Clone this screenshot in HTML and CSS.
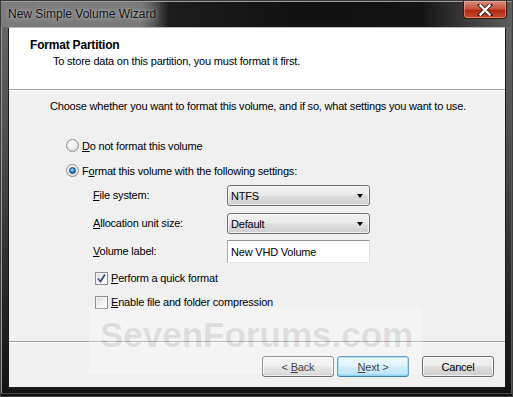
FILE: index.html
```html
<!DOCTYPE html>
<html>
<head>
<meta charset="utf-8">
<link rel="stylesheet" href="styles.css">
</head>
<body>
<div class="window">
  <div class="titlebar">
    <span class="title">New Simple Volume Wizard</span>
    <div class="close">
      <svg width="16" height="12" viewBox="0 0 16 12">
        <path d="M3 1 L13 11 M13 1 L3 11" stroke="#3a1a14" stroke-width="4.2" stroke-linecap="square"/>
        <path d="M3.5 1.5 L12.5 10.5 M12.5 1.5 L3.5 10.5" stroke="#ffffff" stroke-width="2.4" stroke-linecap="square"/>
      </svg>
    </div>
  </div>
  <div class="client">
    <div class="header">
      <div class="h-title">Format Partition</div>
      <div class="h-sub">To store data on this partition, you must format it first.</div>
    </div>
    <div class="content">
      <p class="intro">Choose whether you want to format this volume, and if so, what settings you want to use.</p>
      <div class="opt-row">
        <span class="radio"></span>
        <span><u>D</u>o not format this volume</span>
      </div>
      <div class="opt-row">
        <span class="radio checked"><span class="dot"></span></span>
        <span>F<u>o</u>rmat this volume with the following settings:</span>
      </div>
      <div class="settings">
        <span class="lbl"><u>F</u>ile system:</span>
        <div class="combo"><span>NTFS</span><span class="arrow"></span></div>
        <span class="lbl"><u>A</u>llocation unit size:</span>
        <div class="combo"><span>Default</span><span class="arrow"></span></div>
        <span class="lbl"><u>V</u>olume label:</span>
        <div class="textbox">New VHD Volume</div>
      </div>
      <div class="checks">
        <div class="chk-row">
          <span class="checkbox">
            <svg width="11" height="11" viewBox="0 0 11 11"><path d="M2 5.5 L4.5 8.5 L9 1.5" fill="none" stroke="#3b4f86" stroke-width="1.8"/></svg>
          </span>
          <span><u>P</u>erform a quick format</span>
        </div>
        <div class="chk-row">
          <span class="checkbox"></span>
          <span><u>E</u>nable file and folder compression</span>
        </div>
      </div>
    </div>
    <div class="footer">
      <button class="btn">&lt; <u>B</u>ack</button>
      <button class="btn default"><u>N</u>ext &gt;</button>
      <button class="btn cancel">Cancel</button>
    </div>
    <div class="wm-box"></div>
    <div class="watermark">SevenForums.com</div>
  </div>
  <div class="bottomframe"></div>
</div>
</body>
</html>
```
FILE: styles.css
```css
* { box-sizing: border-box; }
html, body { margin: 0; padding: 0; }
body {
  width: 513px;
  height: 397px;
  overflow: hidden;
  font-family: "Liberation Sans", Arial, sans-serif;
  font-size: 11px;
  letter-spacing: -0.2px;
  color: #000;
  background: #222;
}
.window {
  width: 513px;
  height: 397px;
  display: flex;
  flex-direction: column;
  background: linear-gradient(180deg, #6a6a6a 0%, #4a4a4a 40%, #262626 75%, #121212 100%);
  border: 1px solid #3c3c3c;
  box-shadow: inset 1px 1px 0 #9a9a9a, inset -1px -1px 0 #5a5a5a;
}
.titlebar {
  height: 26px;
  flex: none;
  display: flex;
  justify-content: space-between;
  align-items: flex-start;
  padding-left: 7px;
  padding-right: 5px;
  background: linear-gradient(90deg, #7c7c7c 0px, #7a7a7a 140px, #5a5a5a 152px, #1c1c1c 168px, #121212 300px, #141414 420px, #3e3e3e 470px, #5e5e5e 512px);
  box-shadow: inset 0 1px 0 #9a9a9a;
}
.title {
  margin-top: 6px;
  font-size: 12px;
  letter-spacing: 0;
  line-height: 15px;
  color: #111;
  text-shadow: 0 0 6px rgba(255,255,255,0.55), 0 0 2px rgba(255,255,255,0.4);
}
.close {
  width: 44px;
  height: 18px;
  display: flex;
  align-items: center;
  justify-content: center;
  border: 1px solid #3c1810;
  border-top: none;
  border-radius: 0 0 4px 4px;
  background: linear-gradient(180deg, #d88a7c 0%, #c9553f 45%, #b22b13 55%, #c44a30 100%);
  box-shadow: inset 0 0 0 1px rgba(255,200,190,0.45);
}
.close svg { display: block; }
.client {
  position: relative;
  flex: 1;
  display: flex;
  flex-direction: column;
  margin: 0 6px 0 7px;
  background: #f0f0f0;
  border: 1px solid #1a1a1a;
  border-top-color: #b8b8b8;
  overflow: hidden;
}
.header {
  height: 62px;
  flex: none;
  background: #fff;
  border-bottom: 1px solid #a0a0a0;
  box-shadow: 0 1px 0 #fff;
  padding-top: 10px;
}
.h-title {
  padding-left: 21px;
  font-weight: bold;
  font-size: 12px;
  line-height: 15px;
}
.h-sub {
  padding-left: 44px;
  margin-top: 1px;
  line-height: 15px;
}
.content {
  flex: 1;
  padding: 9px 0 0 41px;
}
.intro {
  margin: 0;
  line-height: 15px;
}
.opt-row {
  height: 25px;
  display: flex;
  align-items: center;
  gap: 3px;
  padding-left: 16px;
}
.intro + .opt-row { margin-top: 19px; }
.radio {
  width: 13px;
  height: 13px;
  border-radius: 50%;
  border: 1px solid #8e8f8f;
  background: radial-gradient(circle at 40% 35%, #ffffff 0%, #f0f0f0 40%, #cfcfcf 100%);
  display: flex;
  align-items: center;
  justify-content: center;
  flex: none;
}
.radio .dot {
  width: 7px;
  height: 7px;
  border-radius: 50%;
  background: radial-gradient(circle at 40% 35%, #9fe0ff 0%, #2f8fd8 45%, #0d3f78 100%);
  border: 1px solid #1b3d66;
}
.settings {
  margin-top: 2px;
  display: grid;
  grid-template-columns: 134px 143px;
  grid-template-rows: 21px 21px 23px;
  row-gap: 7px;
  padding-left: 43px;
  align-items: center;
}
.settings > :nth-child(5), .settings > :nth-child(6) { margin-top: -2px; }
.lbl { line-height: 15px; }
.combo {
  height: 21px;
  display: flex;
  align-items: center;
  justify-content: space-between;
  padding: 0 5px 0 3px;
  border: 1px solid #707070;
  border-radius: 3px;
  background: linear-gradient(180deg, #f2f2f2 0%, #ebebeb 48%, #dddddd 52%, #cfcfcf 100%);
  box-shadow: inset 0 0 0 1px rgba(255,255,255,0.6);
}
.arrow {
  width: 0;
  height: 0;
  border-left: 3.5px solid transparent;
  border-right: 3.5px solid transparent;
  border-top: 4px solid #000;
  margin-right: 1px;
}
.textbox {
  height: 23px;
  display: flex;
  align-items: center;
  padding-left: 3px;
  background: #fff;
  border: 1px solid #abadb3;
  border-top-color: #8e9199;
  border-bottom-color: #e3e9ef;
  border-right-color: #dbdfe6;
}
.checks {
  margin-top: 2px;
  padding-left: 45px;
}
.chk-row {
  height: 24px;
  display: flex;
  align-items: center;
  gap: 3px;
}
.checkbox {
  width: 13px;
  height: 13px;
  flex: none;
  display: flex;
  align-items: center;
  justify-content: center;
  border: 1px solid #8e8f8f;
  background: linear-gradient(135deg, #dcdcdc 0%, #f2f2f2 50%, #ffffff 100%);
  box-shadow: inset 0 0 0 1px #f4f4f4;
}
.checkbox svg { display: block; }
.footer {
  height: 46px;
  flex: none;
  border-top: 1px solid #a0a0a0;
  box-shadow: inset 0 1px 0 #fff;
  display: flex;
  align-items: flex-start;
  justify-content: flex-end;
  padding: 14px 11px 0 0;
}
.btn {
  width: 72px;
  height: 21px;
  padding: 0;
  font-family: "Liberation Sans", Arial, sans-serif;
  font-size: 11px;
  letter-spacing: -0.2px;
  color: #000;
  border: 1px solid #707070;
  border-radius: 3px;
  background: linear-gradient(180deg, #f2f2f2 0%, #ebebeb 48%, #dddddd 52%, #cfcfcf 100%);
  box-shadow: inset 0 0 0 1px rgba(255,255,255,0.7);
}
.btn + .btn { margin-left: 3px; }
.btn.cancel { margin-left: 13px; }
.btn.default {
  border-color: #3c7fb1;
  background: linear-gradient(180deg, #eaf6fd 0%, #d9f0fc 48%, #bee6fd 52%, #a7d9f5 100%);
  box-shadow: inset 0 0 0 1px #8ad4f6;
}
.wm-box {
  position: absolute;
  left: 80px;
  top: 280px;
  width: 333px;
  height: 66px;
  background: rgba(255,255,255,0.25);
  pointer-events: none;
}
.watermark {
  position: absolute;
  left: 91px;
  top: 287px;
  font-family: "Liberation Sans", Arial, sans-serif;
  font-weight: bold;
  font-size: 35px;
  letter-spacing: 0;
  line-height: 40px;
  color: rgba(0,0,0,0.1);
  pointer-events: none;
}
.bottomframe {
  height: 8px;
  flex: none;
  box-shadow: inset 0 -2px 0 #111, inset 0 -3px 0 #4a4a4a;
}
```
